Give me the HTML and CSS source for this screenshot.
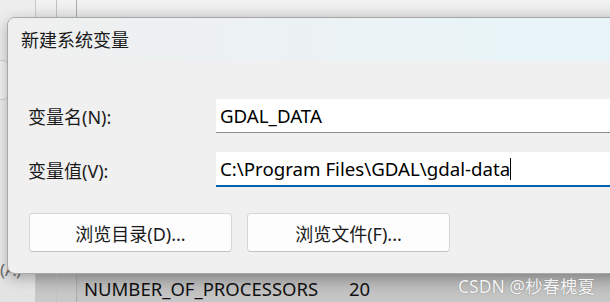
FILE: index.html
```html
<!DOCTYPE html>
<html lang="zh-CN">
<head>
  <meta charset="UTF-8">
  <title>新建系统变量</title>
  <meta name="viewport" content="width=device-width, initial-scale=1">
  <link rel="stylesheet" href="styles.css">
</head>
<body>
  <!-- the environment variable list behind the dialog -->
  <div class="desk">
    <div class="side">
      <div class="side-btn"></div>
      <div class="side-key">(A)</div>
    </div>
    <div class="col"></div>
    <div class="col"></div>
    <div class="list">
      <div class="list-row">
        <span class="cell-name">NUMBER_OF_PROCESSORS</span>
        <span class="cell-value">20</span>
      </div>
    </div>
  </div>

  <div class="dialog">
    <div class="titlebar">新建系统变量</div>
    <div class="dialog-body">
      <div class="field">
        <label class="field-label">变量名(N):</label>
        <div class="textbox">GDAL_DATA</div>
      </div>
      <div class="field">
        <label class="field-label">变量值(V):</label>
        <div class="textbox focused">C:\Program Files\GDAL\gdal-data<span class="caret"></span></div>
      </div>
      <div class="actions">
        <button class="btn">浏览目录(D)...</button>
        <button class="btn">浏览文件(F)...</button>
      </div>
    </div>
  </div>

  <div class="watermark">CSDN @杪春槐夏</div>
</body>
</html>
```

FILE: styles.css
```css
body {
  margin: 0; width: 610px; height: 302px; overflow: hidden; position: relative;
  font-family: "Noto Sans", "Noto Sans CJK SC", sans-serif; color: #1a1a1a;
  background: #efefef;
}

/* background window */
.desk { display: grid; grid-template-columns: 36px 21px 20px 1fr; height: 302px; }
.side {
  position: relative;
  background: linear-gradient(#ededed 0 272px, #e3e3e3 272px);
  border-right: 1px solid #c9c9c9;
}
.side-btn {
  position: absolute; left: -10px; top: 60px; width: 16px; height: 38px;
  border: 1px solid #cfcfcf; border-radius: 4px; background: #f2f2f2;
}
.side-key {
  position: absolute; left: 0; top: 258px; font-size: 17px; color: #6a6a6a;
}
.col {
  border-right: 1px solid #c0c0c0;
  background: linear-gradient(#f3f3f3 0, #e6e6e6 17px, #efefef 17px, #efefef 272px, #b8b8b8 272px, #cbcbcb 302px);
}
.col + .col { border-right-color: #a9a9a9; }
.list {
  display: flex; flex-direction: column; justify-content: flex-end;
  background: linear-gradient(#f4f4f4 0, #e4e4e4 17px, #efefef 17px, #efefef 272px, #b3b3b3 272px, #c8c8c8 302px);
}
.list-row { display: flex; height: 25px; padding-left: 7px; font-size: 18.5px; line-height: 24px; color: #111; }
.cell-name { width: 265px; }

/* dialog */
.dialog {
  position: absolute; left: 7px; top: 17px; width: 660px; height: 255px;
  background: #f0f0f0; border: 1px solid #a8a8a8; border-radius: 8px; overflow: hidden;
  box-shadow: 0 4px 14px rgba(0,0,0,0.28);
}
.titlebar {
  height: 43px; padding-left: 13px; font-size: 18px; line-height: 44px;
  background: linear-gradient(90deg, #efefef 0%, #ecf2f4 45%, #e8f4f8 80%);
}
.dialog-body { padding: 38px 0 0 20px; display: flex; flex-direction: column; }
.field { display: flex; align-items: center; }
.field + .field { margin-top: 19px; }
.field-label { width: 188px; font-size: 18px; }
.textbox {
  flex: 1; height: 33px; padding-left: 4px; background: #fff;
  border-bottom: 1px solid #8b8b8b; font-size: 18.7px; line-height: 33px; color: #000;
  white-space: nowrap;
}
.textbox.focused { border-bottom: 2px solid #0063b1; }
.caret { display: inline-block; width: 1px; height: 22px; background: #000; vertical-align: -4px; }
.actions { display: flex; gap: 15px; margin-top: 26px; padding-left: 1px; }
.btn {
  width: 203px; height: 39px; background: #fdfdfd; border: 1px solid #d6d6d6; border-bottom-color: #c3c3c3;
  border-radius: 4px; font-family: inherit; font-size: 18px; color: #1a1a1a; padding: 0;
}

.watermark {
  position: absolute; left: 458px; top: 273px; font-size: 17.5px; color: #f4f4f4;
  text-shadow: 0 0 1px #8a8a8a, 0 0 1px #8a8a8a;
}
```
